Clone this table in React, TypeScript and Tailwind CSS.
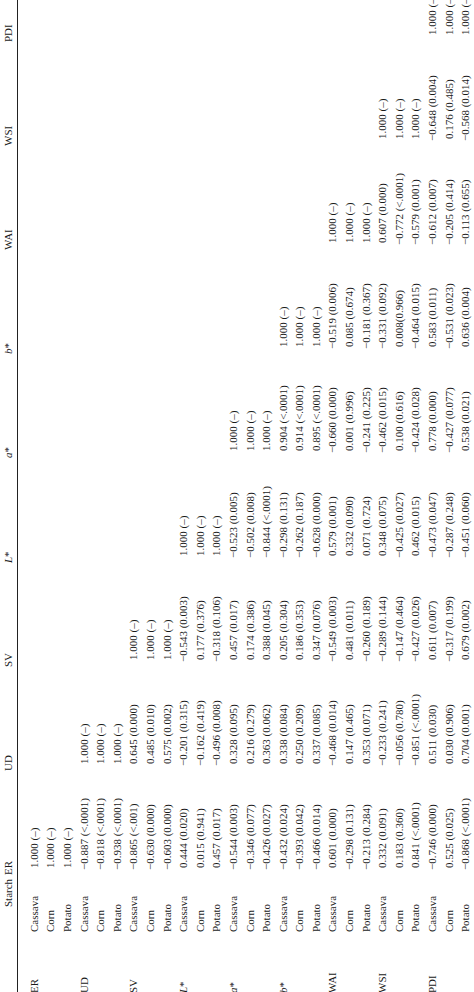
const vars = ['ER', 'UD', 'SV', 'L*', 'a*', 'b*', 'WAI', 'WSI', 'PDI'];
const starches = ['Cassava', 'Corn', 'Potato'];

// one entry per row, values left to right (ER ... own variable)
const data: string[][][] = [
  [['1.000 (–)'], ['1.000 (–)'], ['1.000 (–)']],
  [
    ['−0.887 (<.0001)', '1.000 (–)'],
    ['−0.818 (<.0001)', '1.000 (–)'],
    ['−0.938 (<.0001)', '1.000 (–)'],
  ],
  [
    ['−0.865 (<.001)', '0.645 (0.000)', '1.000 (–)'],
    ['−0.630 (0.000)', '0.485 (0.010)', '1.000 (–)'],
    ['−0.603 (0.000)', '0.575 (0.002)', '1.000 (–)'],
  ],
  [
    ['0.444 (0.020)', '−0.201 (0.315)', '−0.543 (0.003)', '1.000 (–)'],
    ['0.015 (0.941)', '−0.162 (0.419)', '0.177 (0.376)', '1.000 (–)'],
    ['0.457 (0.017)', '−0.496 (0.008)', '−0.318 (0.106)', '1.000 (–)'],
  ],
  [
    ['−0.544 (0.003)', '0.328 (0.095)', '0.457 (0.017)', '−0.523 (0.005)', '1.000 (–)'],
    ['−0.346 (0.077)', '0.216 (0.279)', '0.174 (0.386)', '−0.502 (0.008)', '1.000 (–)'],
    ['−0.426 (0.027)', '0.363 (0.062)', '0.388 (0.045)', '−0.844 (<.0001)', '1.000 (–)'],
  ],
  [
    ['−0.432 (0.024)', '0.338 (0.084)', '0.205 (0.304)', '−0.298 (0.131)', '0.904 (<.0001)', '1.000 (–)'],
    ['−0.393 (0.042)', '0.250 (0.209)', '0.186 (0.353)', '−0.262 (0.187)', '0.914 (<.0001)', '1.000 (–)'],
    ['−0.466 (0.014)', '0.337 (0.085)', '0.347 (0.076)', '−0.628 (0.000)', '0.895 (<.0001)', '1.000 (–)'],
  ],
  [
    ['0.601 (0.000)', '−0.468 (0.014)', '−0.549 (0.003)', '0.579 (0.001)', '−0.660 (0.000)', '−0.519 (0.006)', '1.000 (–)'],
    ['−0.298 (0.131)', '0.147 (0.465)', '0.481 (0.011)', '0.332 (0.090)', '0.001 (0.996)', '0.085 (0.674)', '1.000 (–)'],
    ['−0.213 (0.284)', '0.353 (0.071)', '−0.260 (0.189)', '0.071 (0.724)', '−0.241 (0.225)', '−0.181 (0.367)', '1.000 (–)'],
  ],
  [
    ['0.332 (0.091)', '−0.233 (0.241)', '−0.289 (0.144)', '0.348 (0.075)', '−0.462 (0.015)', '−0.331 (0.092)', '0.607 (0.000)', '1.000 (–)'],
    ['0.183 (0.360)', '−0.056 (0.780)', '−0.147 (0.464)', '−0.425 (0.027)', '0.100 (0.616)', '0.008(0.966)', '−0.772 (<.0001)', '1.000 (–)'],
    ['0.841 (<.0001)', '−0.851 (<.0001)', '−0.427 (0.026)', '0.462 (0.015)', '−0.424 (0.028)', '−0.464 (0.015)', '−0.579 (0.001)', '1.000 (–)'],
  ],
  [
    ['−0.746 (0.000)', '0.511 (0.030)', '0.611 (0.007)', '−0.473 (0.047)', '0.778 (0.000)', '0.583 (0.011)', '−0.612 (0.007)', '−0.648 (0.004)', '1.000 (–)'],
    ['0.525 (0.025)', '0.030 (0.906)', '−0.317 (0.199)', '−0.287 (0.248)', '−0.427 (0.077)', '−0.531 (0.023)', '−0.205 (0.414)', '0.176 (0.485)', '1.000 (–)'],
    ['−0.868 (<.0001)', '0.704 (0.001)', '0.679 (0.002)', '−0.451 (0.060)', '0.538 (0.021)', '0.636 (0.004)', '−0.113 (0.655)', '−0.568 (0.014)', '1.000 (–)'],
  ],
];

const grid =
  'grid grid-cols-[60px_57px_104px_104px_104px_105px_104px_104px_104px_104px_42px] whitespace-nowrap';

function VarName({ name }: { name: string }) {
  if (name.endsWith('*')) {
    return (
      <span>
        <i>{name[0]}</i>*
      </span>
    );
  }
  return <span>{name}</span>;
}

function Value({ v }: { v: string }) {
  const neg = v.startsWith('−');
  return <span className={neg ? 'pl-[5px]' : 'pl-[7px]'}>{v}</span>;
}

export default function App() {
  return (
    <div className="h-[992px] w-[474px] overflow-hidden bg-white">
      {/* the table is printed sideways, so build it flat and turn it */}
      <div
        className="h-[474px] w-[992px] origin-top-left translate-y-[992px] -rotate-90 text-[11px] text-[#1a1a1a]"
        style={{ fontFamily: '"Liberation Serif", "Times New Roman", serif' }}
      >
        <div className={`${grid} h-[18px] items-center border-b border-[#222] leading-none`}>
          <span />
          <span className="pl-[25px]">Starch</span>
          {vars.map((v) => (
            <span key={v}>
              <VarName name={v} />
            </span>
          ))}
        </div>
        <div className="pt-[8px]">
          {data.map((group, gi) =>
            group.map((vals, si) => (
              <div key={`${gi}-${si}`} className={`${grid} h-[16.6px] items-center leading-none`}>
                <span className="-ml-[1px]">{si === 0 ? <VarName name={vars[gi]} /> : null}</span>
                <span>{starches[si]}</span>
                {vals.map((v, i) => (
                  <Value key={i} v={v} />
                ))}
              </div>
            )),
          )}
        </div>
      </div>
    </div>
  );
}
